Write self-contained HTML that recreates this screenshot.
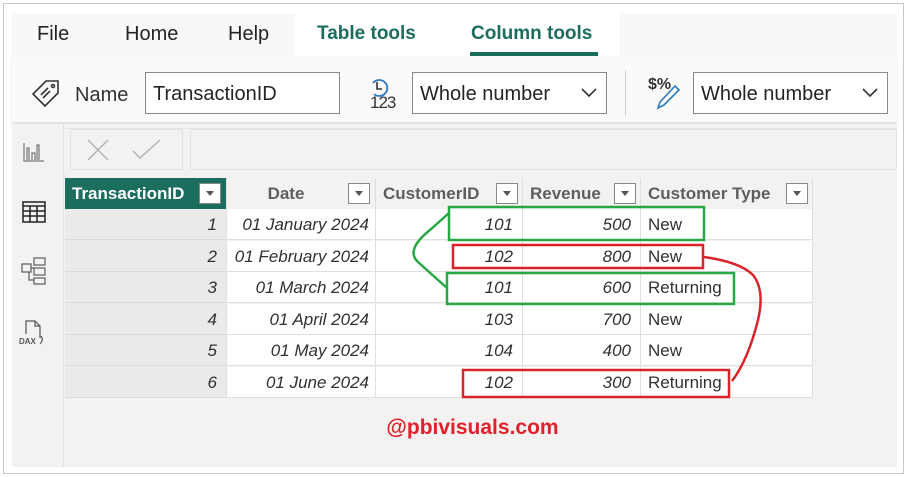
<!DOCTYPE html>
<html><head><meta charset="utf-8"><style>
*{margin:0;padding:0;box-sizing:border-box}
body{width:907px;height:477px;background:#fff;position:relative;overflow:hidden;font-family:"Liberation Sans",sans-serif;color:#252423}
.a{position:absolute}
.t{font-size:20px}
.box{position:absolute;background:#fff;border:1px solid #8a8886;font-size:20px;padding-left:7px;line-height:42px}
.hd{position:absolute;top:178px;height:31px;font-weight:bold;font-size:17px;color:#605e5c;line-height:31px;background:#f3f2f1;border-right:1px solid #e1dfdd}
.fb{position:absolute;top:5px;width:22px;height:21px;border:1px solid #8a8886;background:#fff}
.fb:after{content:"";position:absolute;left:6px;top:7px;border-left:4px solid transparent;border-right:4px solid transparent;border-top:5px solid #555}
.c{position:absolute;height:31px;line-height:31px;font-size:17px;font-style:italic;text-align:right;padding-right:9px;border-bottom:1px solid #e1dfdd;border-right:1px solid #e1dfdd;background:#fff;color:#323130}
.chev{position:absolute;right:9px;top:15px}
</style></head><body>
<div class="a" style="left:3px;top:3px;width:901px;height:471px;border:1px solid #c8c8c8"></div>
<div class="a" style="left:12px;top:13px;width:885px;height:111px;background:#f8f8f8"></div>
<div class="a" style="left:295px;top:13px;width:325px;height:43px;background:#fff"></div>
<div class="a t" style="left:37px;top:23px">File</div>
<div class="a t" style="left:125px;top:23px">Home</div>
<div class="a t" style="left:228px;top:23px">Help</div>
<div class="a t" style="left:317px;top:23px;color:#1b6d5e;font-weight:bold;font-size:19px">Table tools</div>
<div class="a t" style="left:471px;top:23px;color:#1b6d5e;font-weight:bold;font-size:19px">Column tools</div>
<div class="a" style="left:470px;top:52px;width:128px;height:4px;background:#1b6d5e"></div>
<div class="a" style="left:12px;top:56px;width:885px;height:66px;background:#fafafa;box-shadow:0 2px 3px rgba(0,0,0,.12)"></div>
<svg class="a" style="left:30px;top:78px" width="32" height="32" viewBox="0 0 32 32" fill="none" stroke="#333" stroke-width="1.6"><path d="M16 3h12v12L15 28 3 16z"/><circle cx="23" cy="8" r="1.5"/><path d="M11 17l7-7M13 20l7-7"/></svg>
<div class="a t" style="left:75px;top:84px;color:#323130">Name</div>
<div class="box" style="left:145px;top:72px;width:195px;height:42px">TransactionID</div>
<svg class="a" style="left:366px;top:77px" width="34" height="34" viewBox="0 0 34 34" fill="none"><path d="M7 6a8 8 0 1 1 1 11" stroke="#2b79c2" stroke-width="1.8"/><path d="M11 5v7h5" stroke="#333" stroke-width="1.6"/><text x="4" y="31" font-size="17" fill="#333" stroke="none" font-family="Liberation Sans" letter-spacing="-1">123</text></svg>
<div class="box" style="left:412px;top:72px;width:195px;height:42px">Whole number<svg class="chev" width="16" height="10" viewBox="0 0 16 10" fill="none" stroke="#333" stroke-width="1.6"><path d="M1 1l7 7 7-7"/></svg></div>
<div class="a" style="left:625px;top:70px;width:1px;height:46px;background:#d0d0d0"></div>
<div class="a" style="left:648px;top:76px;font-weight:bold;font-size:16px;color:#333">$%</div>
<svg class="a" style="left:656px;top:84px" width="24" height="26" viewBox="0 0 24 26" fill="none" stroke="#2b79c2" stroke-width="1.6"><path d="M19 2l4 4L8 21l-6 3 2-6z"/></svg>
<div class="box" style="left:693px;top:72px;width:195px;height:42px">Whole number<svg class="chev" width="16" height="10" viewBox="0 0 16 10" fill="none" stroke="#333" stroke-width="1.6"><path d="M1 1l7 7 7-7"/></svg></div>
<div class="a" style="left:12px;top:124px;width:885px;height:343px;background:#f3f2f1"></div>
<div class="a" style="left:63px;top:124px;width:1px;height:343px;background:#e1dfdd"></div>
<div class="a" style="left:64px;top:128px;width:833px;height:1px;background:#e6e4e2"></div>
<svg class="a" style="left:22px;top:140px" width="24" height="24" viewBox="0 0 24 24" fill="none" stroke="#777" stroke-width="1.2"><path d="M2 3v18h20M5 20V8h2v12M10 20v-7h3v7M15 20V5h2v15"/></svg>
<svg class="a" style="left:21px;top:200px" width="26" height="24" viewBox="0 0 26 24" fill="none" stroke="#222" stroke-width="1.5"><rect x="2" y="2" width="22" height="20"/><path d="M2 6h22M2 11h22M2 16h22M9 6v16M16 6v16"/></svg>
<svg class="a" style="left:20px;top:256px" width="28" height="30" viewBox="0 0 28 30" fill="none" stroke="#666" stroke-width="1.3"><rect x="2" y="8" width="9" height="8"/><rect x="14" y="2" width="11" height="7"/><rect x="14" y="12" width="11" height="7"/><rect x="14" y="22" width="11" height="6"/><path d="M11 12h3M9 16v8h5"/></svg>
<svg class="a" style="left:18px;top:318px" width="30" height="28" viewBox="0 0 30 28" fill="none" stroke="#555" stroke-width="1.2"><path d="M8 16V3h9l5 5v12M17 3v5h5"/><text x="1" y="26" font-size="8" font-weight="bold" fill="#555" stroke="none" font-family="Liberation Sans">DAX</text><path d="M23 18q3 4-1 8"/></svg>
<div class="a" style="left:70px;top:129px;width:113px;height:41px;background:#f3f2f1;border:1px solid #e1dfdd;border-radius:3px"></div>
<svg class="a" style="left:85px;top:137px" width="80" height="26" viewBox="0 0 80 26" fill="none" stroke="#b5b3b1" stroke-width="1.5"><path d="M3 3l20 20M23 3L3 23M48 14l7 7L75 3"/></svg>
<div class="a" style="left:190px;top:129px;width:707px;height:41px;background:#f3f2f1;border:1px solid #e1dfdd;border-radius:3px"></div>
<div class="hd" style="left:65px;width:162px;background:#1b6d5e;color:#fff;padding-left:7px">TransactionID<div class="fb" style="left:134px"></div></div>
<div class="hd" style="left:227px;width:149px;text-align:center;padding-right:30px">Date<div class="fb" style="left:121px"></div></div>
<div class="hd" style="left:376px;width:147px;padding-left:7px">CustomerID<div class="fb" style="left:120px"></div></div>
<div class="hd" style="left:523px;width:118px;padding-left:7px">Revenue<div class="fb" style="left:91px"></div></div>
<div class="hd" style="left:641px;width:172px;padding-left:7px">Customer Type<div class="fb" style="left:145px"></div></div>
<div class="a" style="left:65px;top:209px;width:162px;height:189px;background:#ebeae8"></div>
<div id="rows"></div>
<script>
var d=[[1,"01 January 2024",101,500,"New"],[2,"01 February 2024",102,800,"New"],[3,"01 March 2024",101,600,"Returning"],[4,"01 April 2024",103,700,"New"],[5,"01 May 2024",104,400,"New"],[6,"01 June 2024",102,300,"Returning"]];
var h="";d.forEach(function(r,i){var y=209+i*31.5;
h+='<div class="c" style="left:65px;top:'+y+'px;width:162px;background:#ebeae8;border-bottom-color:#dcdad8">'+r[0]+'</div>';
h+='<div class="c" style="left:227px;top:'+y+'px;width:149px;padding-right:6px">'+r[1]+'</div>';
h+='<div class="c" style="left:376px;top:'+y+'px;width:147px">'+r[2]+'</div>';
h+='<div class="c" style="left:523px;top:'+y+'px;width:118px">'+r[3]+'</div>';
h+='<div class="c" style="left:641px;top:'+y+'px;width:172px;text-align:left;font-style:normal;padding-left:7px">'+r[4]+'</div>';});
document.getElementById("rows").innerHTML=h;
</script>
<svg class="a" style="left:0;top:0" width="907" height="477" fill="none" stroke-width="2.5">
<rect x="449" y="207" width="255" height="33" stroke="#28a745"/>
<rect x="447" y="273" width="287" height="31" stroke="#28a745"/>
<path d="M449 213L430 230Q405 250 418 262L447 288" stroke="#28a745"/>
<rect x="453" y="245" width="250" height="23" stroke="#d9232b"/>
<rect x="463" y="370" width="266" height="27" stroke="#d9232b"/>
<path d="M704 257Q740 262 753 275Q765 290 758 320Q748 360 732 381" stroke="#d9232b"/>
</svg>
<div class="a" style="left:0;width:945px;top:416px;text-align:center;font-size:21px;font-weight:bold;color:#e0202a">@pbivisuals.com</div>
</body></html>
